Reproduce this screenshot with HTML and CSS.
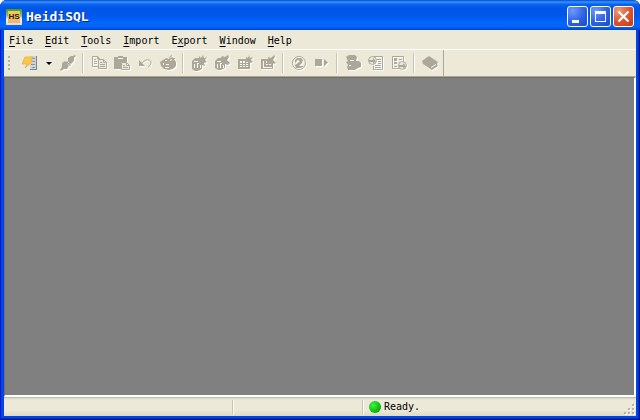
FILE: index.html
```html
<!DOCTYPE html>
<html lang="en">
<head>
<meta charset="utf-8">
<title>HeidiSQL</title>
<link rel="stylesheet" href="styles.css">
</head>
<body>
<div class="window">
  <header class="titlebar">
    <span class="logo"><b>HS</b></span>
    <h1 class="title">HeidiSQL</h1>
    <button class="caption" aria-label="Minimize"><svg width="19" height="19"><path d="M4 13h7v3H4z" fill="#fff"/></svg></button>
    <button class="caption" aria-label="Maximize"><svg width="19" height="19"><path d="M4 4h11v11H4zM5 7v7h9V7z" fill="#fff" fill-rule="evenodd"/></svg></button>
    <button class="caption close" aria-label="Close"><svg width="19" height="19"><path d="M4.500 4.500l10 10M14.500 4.500l-10 10" stroke="#fff" stroke-width="2.200"/></svg></button>
  </header>
  <div class="client">
    <nav class="menubar">
      <button><u>F</u>ile</button>
      <button><u>E</u>dit</button>
      <button><u>T</u>ools</button>
      <button><u>I</u>mport</button>
      <button>E<u>x</u>port</button>
      <button><u>W</u>indow</button>
      <button><u>H</u>elp</button>
    </nav>
    <div class="toolrow">
      <div class="toolbar" role="toolbar">
        <span class="grip"></span>
        <button class="tool live" aria-label="Connect"><svg viewBox="0 0 16 16">
          <path d="M8 1h7v13H8z" fill="#cdd3dc"/><path d="M14 1h1v14H8v-1h6z" fill="#76839c"/><path d="M9 3.500h4M9 6.500h4M9 9.500h4" stroke="#8695ae"/><path d="M10 12.500h3" stroke="#6db45c"/>
          <path d="M3 2h8L9 6h2l-8 7 2-4H0z" fill="#fcc648"/><path d="M3 2h8L9 6h2l-8 7 2-4H0z" fill="none" stroke="#dba14a" stroke-width=".6"/></svg></button>
        <button class="drop" aria-label="Connections"><svg viewBox="0 0 6 3"><path d="M0 0h6L3 3z"/></svg></button>
        <button class="tool" aria-label="Disconnect"><svg viewBox="0 0 16 16"><path d="M8 3l3-2h2l2-1 1 1-2 2v3l-3 3-2-1-1-2zM2 8l3-2 2 2 2 3-2 3H4l-3 2-1-1 2-3zM6 7l1-1 4 4-1 1z"/><path class="light" d="M8 7h1v1H8z"/></svg></button>
        <span class="sep"></span>
        <button class="tool" aria-label="Copy"><svg viewBox="0 0 16 16"><path class="line" d="M1.500 1.500h5l2 2v8h-7zM6.500 1.500v2h2M3 4.500h2M3 6.500h3M3 8.500h3"/><path class="line face" d="M7.500 4.500h5l3 3v6h-8zM12.500 4.500v3h3M9 7.500h2M9 9.500h5M9 11.500h5"/></svg></button>
        <button class="tool" aria-label="Paste"><svg viewBox="0 0 16 16"><path d="M0 2h4V1h5v1h4v5H7v7H0z"/><path class="light" d="M4 3h5v1H4z"/><path class="line face" d="M7.500 7.500h5l3 3v4h-8zM12.500 7.500v3h3M9 10.500h2M9 12.500h5"/></svg></button>
        <button class="tool" aria-label="Undo"><svg viewBox="0 0 16 16"><path d="M2 5v6h6z"/><path class="line" d="M5 8c3-4 8-4 9-1 0 2-1 4-3 5"/></svg></button>
        <button class="tool" aria-label="Print"><svg viewBox="0 0 16 16"><path d="M3 5l3-2 3 1 3-2 2 2 2 3v4l-3 3-4 1-5-1-3-3-1-4z"/><path class="light" d="M5 5h2v1H5zM10 5l2-1v1l-2 1zM3 8h1v2H3zM6 9h3v1H6zM5 12h4v1H5z"/><path class="line" d="M10 4V1.500l2-1M13 3.500h2"/></svg></button>
        <span class="sep"></span>
        <button class="tool" aria-label="Create database"><svg viewBox="0 0 16 16"><path d="M1 6l3-3h4V1l2 2 2-3 1 3 3-1-2 3 2 2-3 1 1 3-3-1v4l-4 2H4l-3-2z"/><path class="light" d="M3 6h4v1H3zM3 9h1v4H3zM6 8h2v1H7v4H6zM9 10h1v3H9z"/></svg></button>
        <button class="tool" aria-label="Drop database"><svg viewBox="0 0 16 16"><path d="M1 6l3-3h3l1-2 3 1 3-2 1 2-2 3 3 3-2 2-3-1v4l-4 2H4l-3-2z"/><path class="light" d="M3 6h4v1H3zM3 9h1v4H3zM6 8h2v1H7v4H6zM9 10h1v3H9z"/></svg></button>
        <button class="tool" aria-label="Create table"><svg viewBox="0 0 16 16"><path d="M1 4h8V2l2 1 1-3 1 3 3-1-2 3 2 2-3 1v6H1z"/><path class="light" d="M3 6h2v2H3zM6 6h2v2H6zM9 7h2v1H9zM3 9h2v1H3zM6 9h2v1H6zM9 9h2v1H9zM3 11h2v1H3zM6 11h2v1H6zM9 11h2v1H9z"/></svg></button>
        <button class="tool" aria-label="Drop table"><svg viewBox="0 0 16 16"><path d="M1 4h7V2l3 1 3-3 1 2-2 3 3 3-2 1-1-1v6H1z"/><path class="light" d="M3 6h1v6h8v1H3zM6 6h1v2H6zM6 9h2v1H6zM9 9h2v1H9z"/></svg></button>
        <span class="sep"></span>
        <button class="tool" aria-label="Refresh"><svg viewBox="0 0 16 16"><circle class="line" cx="8" cy="8" r="6.500"/><path d="M4 8V5l2-2h4l2 2-1 3-3 3h4v1l-3 1H5l-1-3 3-2 2-2-2-1z"/></svg></button>
        <button class="tool" aria-label="Run"><svg viewBox="0 0 16 16"><path d="M1 4h7v7H1zM10 4l4 3.500-4 4z"/></svg></button>
        <span class="sep"></span>
        <button class="tool" aria-label="User manager"><svg viewBox="0 0 16 16"><path d="M1 2l3-2h6l2 2-1 4h3l2 2v4l-3 1-3 2H3l-1-3 1-2-2-3 2-1z"/><path class="light" d="M5 5h4v1H5zM4 10h2v1H4z"/></svg></button>
        <button class="tool" aria-label="Import text file"><svg viewBox="0 0 16 16"><path class="line" d="M5.500 1.500h9v13h-9v-4M9 4.500h4M10 6.500h3M10 8.500h3M7 10.500h6M7 12.500h6"/><circle class="line face" cx="4.500" cy="5.500" r="4"/><path d="M1 5h4V3l3 3-3 3V7H1z"/></svg></button>
        <button class="tool" aria-label="Export tables"><svg viewBox="0 0 16 16"><path class="line" d="M1.500 1.500h11v12h-11zM8 4.500h3M8 8.500h2"/><path d="M3 3h3v3H3zM3 7h3v2H3zM3 11h3v1H3z"/><circle class="line face" cx="11.500" cy="10.500" r="4"/><path d="M8 10h4V8l3 3-3 3v-2H8z"/></svg></button>
        <span class="sep"></span>
        <button class="tool" aria-label="Help"><svg viewBox="0 0 16 16"><path d="M0 6l4-3 3-2 9 6-1 2 1 2-6 4-9-6z"/><path class="light" d="M9 12l5-3v1l-5 3z"/></svg></button>
      </div>
    </div>
    <main class="workspace"></main>
    <footer class="status">
      <span class="panel first"></span>
      <span class="panel second"></span>
      <span class="panel ready"><i class="lamp"></i>Ready.</span>
      <svg class="sizer" width="12" height="12"><path d="M8 0h2v2H8zM4 4h2v2H4zM8 4h2v2H8zM0 8h2v2H0zM4 8h2v2H4zM8 8h2v2H8z" fill="#fff" transform="translate(1 1)"/><path d="M8 0h2v2H8zM4 4h2v2H4zM8 4h2v2H8zM0 8h2v2H0zM4 8h2v2H4zM8 8h2v2H8z" fill="#b8b4a3"/></svg>
    </footer>
  </div>
</div>
</body>
</html>
```
FILE: styles.css
```css
* { box-sizing: border-box; }
body {
  margin: 0;
  background: #fff;
  color: #000;
  font: 10px/14px "DejaVu Sans Mono", "Liberation Mono", monospace;
}
button { margin: 0; padding: 0; border: 0; background: none; color: inherit; font: inherit; }
svg { display: block; }

.window {
  display: flex;
  flex-direction: column;
  height: 100vh;
  padding: 0 4px 4px;
  background: #0046e0;
  border-radius: 7px 7px 0 0;
  box-shadow: inset 1px 0 #0019cf, inset -1px -1px #00138c, inset -2px -2px #0030c8;
}
.titlebar {
  display: flex;
  align-items: center;
  gap: 2px;
  height: 30px;
  margin: 0 -4px;
  padding: 3px 6px 0;
  border-radius: 7px 7px 0 0;
  background: linear-gradient(#0546c8 0, #3a93ff 2px, #0a66f0 4px, #0055e5 8px, #0058ec 16px, #0367fc 23px, #0364f5 27px, #0043cf 30px);
}
.logo {
  display: flex;
  align-items: center;
  justify-content: center;
  width: 16px;
  height: 16px;
  background: linear-gradient(#3f9a28, #8cc070 40%, #f4f4ec 65%, #dcdcd4);
}
.logo b {
  width: 12px;
  height: 12px;
  background: linear-gradient(#f0cc50, #f8b070);
  color: #222;
  font: bold 8px/12px "Liberation Sans", sans-serif;
  text-align: center;
}
.title {
  flex: 1;
  margin: 0 0 0 2px;
  color: #fff;
  font-size: 13px;
  line-height: 18px;
  text-shadow: 1px 1px #0a2a90;
}
.caption {
  width: 21px;
  height: 21px;
  border: 1px solid #fff;
  border-radius: 3px;
  background: radial-gradient(circle at 25% 20%, #6c9bf8, #2d61e6 55%, #1c49c8);
}
.close { background: radial-gradient(circle at 25% 20%, #f09878, #df502c 55%, #c33c12); }

.client { flex: 1; display: flex; flex-direction: column; background: #ece9d8; }
.menubar {
  display: flex;
  gap: 12px;
  height: 20px;
  padding: 2px 5px 0;
  border-bottom: 1px solid #fff;
}
.menubar u { text-underline-offset: 2px; }
.toolrow { display: flex; height: 27px; border-bottom: 1px solid #aca899; }
.toolbar { display: flex; align-items: center; padding-right: 2px; border-right: 1px solid #aca899; }
.grip {
  width: 3px;
  height: 15px;
  margin: 0 7px 0 4px;
  background: repeating-linear-gradient(#b5b19f 0 2px, transparent 2px 4px);
  border-right: 1px solid #ece9d8;
}
.tool { display: flex; justify-content: center; width: 23px; }
.tool svg {
  width: 16px;
  height: 16px;
  fill: #aca899;
  filter: drop-shadow(1px 1px 0 #fff);
}
.tool.live svg { filter: none; }
.tool .line { fill: none; stroke: #aca899; }
.tool .light { fill: #f7f5ec; }
.tool .face { fill: #ece9d8; }
.drop { display: flex; justify-content: center; width: 15px; }
.drop svg { width: 6px; height: 3px; }
.sep {
  flex: none;
  width: 2px;
  height: 20px;
  margin: 0 3px;
  border-left: 1px solid #c5c2b0;
  border-right: 1px solid #fff;
}

.workspace {
  flex: 1;
  background: #808080;
  border: 1px solid #716f64;
  border-right: 2px solid #fff;
  border-bottom: 2px solid #fff;
}
.status {
  display: flex;
  align-items: center;
  height: 19px;
  padding-top: 1px;
  background: linear-gradient(#aca899 0, #d8d4c4 1px, #ece9d8 3px, #ece9d8 13px, #dedac8);
}
.panel { height: 14px; }
.panel.first, .panel.second { border-right: 1px solid #fff; box-shadow: inset -1px 0 #c5c2b0; }
.first { flex: 0 1 230px; }
.second { flex: 0 1 130px; }
.ready { flex: 1; display: flex; align-items: center; gap: 3px; padding-left: 5px; }
.lamp {
  width: 12px;
  height: 12px;
  border-radius: 50%;
  background: radial-gradient(circle at 35% 35%, #48f048, #12ce12 45%, #088408);
}
.sizer { align-self: flex-end; }
```
